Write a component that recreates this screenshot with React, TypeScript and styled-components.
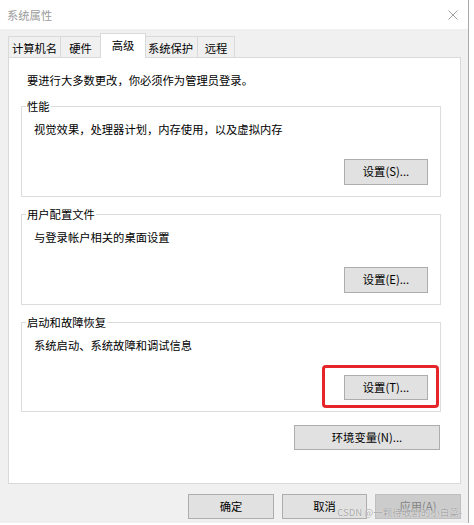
import React from 'react';
import styled, { createGlobalStyle } from 'styled-components';

const GlobalStyle = createGlobalStyle`
  html, body {
    margin: 0;
    padding: 0;
    background: #ffffff;
  }
  body {
    font-family: "Noto Sans CJK SC", "Liberation Sans", sans-serif;
    font-size: 11.3px;
    color: #000;
  }
`;

const Window = styled.div`
  position: relative;
  width: 469px;
  height: 523px;
  box-sizing: border-box;
  border-right: 1px solid #a9a9a9;
  display: flex;
  flex-direction: column;
`;

const TitleBar = styled.div`
  height: 29px;
  flex-shrink: 0;
  background: #fff;
  display: flex;
  align-items: center;
  justify-content: space-between;
  padding: 0 10px 0 7px;
  color: #9c9c9c;
`;

const Body = styled.div`
  flex: 1;
  background: #f0f0f0;
  padding: 4px 7px 4px 8px;
  display: flex;
  flex-direction: column;
`;

const TabStrip = styled.div`
  display: flex;
  align-items: flex-end;
`;

const Tab = styled.div<{ $w: number; $active?: boolean }>`
  width: ${({ $w }) => $w}px;
  height: ${({ $active }) => ($active ? 25 : 21)}px;
  box-sizing: border-box;
  display: flex;
  align-items: center;
  justify-content: center;
  border: 1px solid #d9d9d9;
  border-bottom: none;
  background: ${({ $active }) => ($active ? '#ffffff' : '#f0f0f0')};
  padding: ${({ $active }) => ($active ? '0 0 3px' : '2px 0 0')};
  margin: ${({ $active }) => ($active ? '0 -2px -1px -2px' : '0')};
  position: ${({ $active }) => ($active ? 'relative' : 'static')};
  z-index: ${({ $active }) => ($active ? 1 : 'auto')};

  & + & {
    margin-left: ${({ $active }) => ($active ? '-2px' : '-1px')};
  }
`;

const Panel = styled.div`
  height: 427px;
  box-sizing: border-box;
  background: #fff;
  border: 1px solid #d9d9d9;
  padding-top: 14px;
  display: flex;
  flex-direction: column;
`;

const Intro = styled.div`
  padding-left: 18px;
  line-height: 16px;
`;

const GroupBox = styled.fieldset`
  margin: 11px 19px 0 12px;
  padding: 0 12px 11px 4px;
  border: 1px solid #dcdcdc;
  min-width: 0;

  & + & {
    margin-top: 10px;
  }
`;

const Legend = styled.legend`
  padding: 0 1px;
  line-height: 14px;
`;

const Desc = styled.div`
  margin: 8px 0 0 8px;
  line-height: 16px;
`;

const ButtonRow = styled.div<{ $top: number; $right?: number }>`
  display: flex;
  justify-content: flex-end;
  gap: 8px;
  margin-top: ${({ $top }) => $top}px;
  margin-right: ${({ $right }) => $right ?? 0}px;
`;

const Button = styled.button<{ $w: number; $h: number }>`
  width: ${({ $w }) => $w}px;
  height: ${({ $h }) => $h}px;
  box-sizing: border-box;
  padding: 0;
  background: #e1e1e1;
  border: 1px solid #adadad;
  border-radius: 0;
  font: inherit;
  color: #000;
  line-height: 1;

  &:disabled {
    background: #cccccc;
    border-color: #bfbfbf;
    color: #838383;
  }
`;

const Highlight = styled.span`
  position: relative;
  display: inline-flex;

  &::after {
    content: '';
    position: absolute;
    top: -10px;
    bottom: -8px;
    left: -22px;
    right: -11px;
    border: 3px solid #e5252a;
    border-radius: 4px;
    pointer-events: none;
  }
`;

const Watermark = styled.div`
  position: absolute;
  right: 6px;
  bottom: 4px;
  font-size: 9.5px;
  color: rgba(150, 150, 150, 0.85);
  text-shadow: 0 0 1px #fff;
  pointer-events: none;
`;

const CloseIcon = () => (
  <svg width="10" height="10" viewBox="0 0 10 10">
    <path d="M0.5 0.5 L9.5 9.5 M9.5 0.5 L0.5 9.5" stroke="#a0a0a0" strokeWidth="1" fill="none" />
  </svg>
);

const groups = [
  { title: '性能', desc: '视觉效果，处理器计划，内存使用，以及虚拟内存', button: '设置(S)...' },
  { title: '用户配置文件', desc: '与登录帐户相关的桌面设置', button: '设置(E)...' },
  { title: '启动和故障恢复', desc: '系统启动、系统故障和调试信息', button: '设置(T)...', marked: true },
];

const tabs = [
  { label: '计算机名', w: 53 },
  { label: '硬件', w: 41 },
  { label: '高级', w: 46, active: true },
  { label: '系统保护', w: 55 },
  { label: '远程', w: 38 },
];

export default function App() {
  return (
    <>
      <GlobalStyle />
      <Window>
        <TitleBar>
          <span>系统属性</span>
          <CloseIcon />
        </TitleBar>
        <Body>
          <TabStrip>
            {tabs.map((t) => (
              <Tab key={t.label} $w={t.w} $active={t.active}>
                {t.label}
              </Tab>
            ))}
          </TabStrip>
          <Panel>
            <Intro>要进行大多数更改，你必须作为管理员登录。</Intro>
            {groups.map((g) => (
              <GroupBox key={g.title}>
                <Legend>{g.title}</Legend>
                <Desc>{g.desc}</Desc>
                <ButtonRow $top={22}>
                  {g.marked ? (
                    <Highlight>
                      <Button $w={84} $h={25}>{g.button}</Button>
                    </Highlight>
                  ) : (
                    <Button $w={84} $h={26}>{g.button}</Button>
                  )}
                </ButtonRow>
              </GroupBox>
            ))}
            <ButtonRow $top={13} $right={20}>
              <Button $w={146} $h={25}>环境变量(N)...</Button>
            </ButtonRow>
          </Panel>
          <ButtonRow $top={10}>
            <Button $w={86} $h={25}>确定</Button>
            <Button $w={85} $h={25}>取消</Button>
            <Button $w={86} $h={25} disabled>应用(A)</Button>
          </ButtonRow>
        </Body>
        <Watermark>CSDN @一颗待收割的小白菜-</Watermark>
      </Window>
    </>
  );
}
